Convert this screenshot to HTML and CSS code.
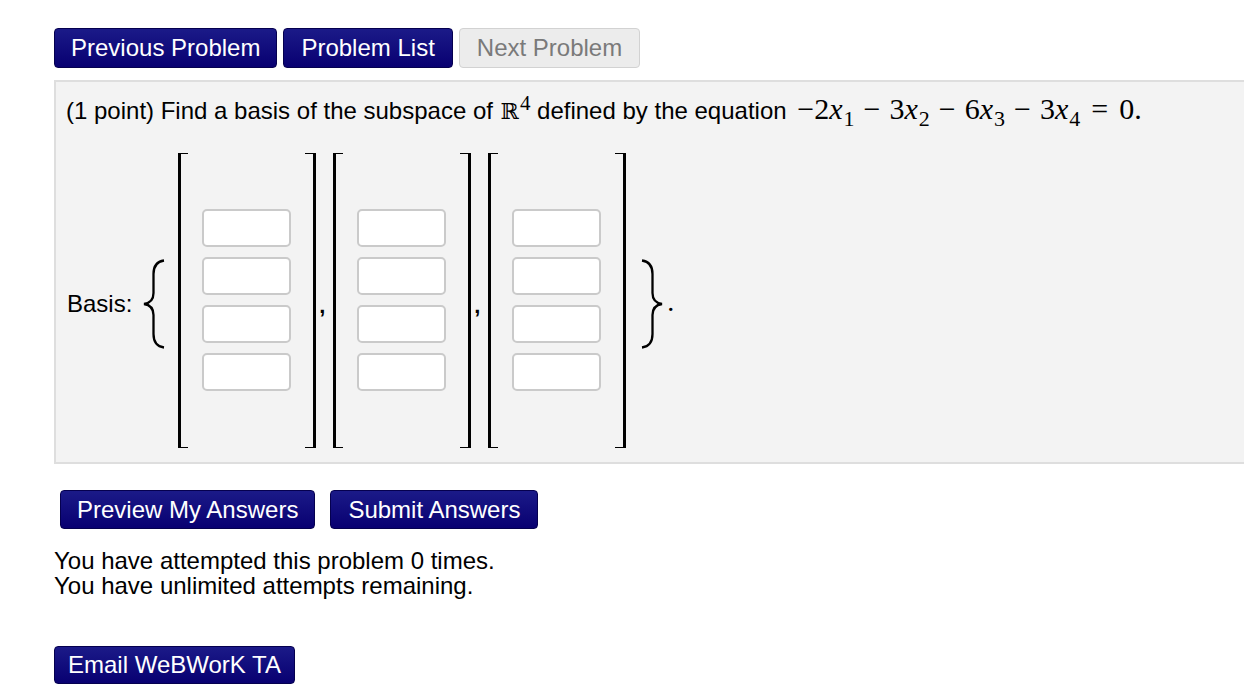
FILE: index.html
```html
<!DOCTYPE html>
<html>
<head>
<meta charset="utf-8">
<link rel="stylesheet" href="styles.css">
</head>
<body>
<div class="nav">
  <button class="btn">Previous Problem</button>
  <button class="btn btn-list">Problem List</button>
  <button class="btn disabled">Next Problem</button>
</div>
<div class="problem">
  <p class="statement">(1 point) Find a basis of the subspace of <span class="bb">ℝ<sup>4</sup></span> defined by the equation <span class="math"><span class="neg">−</span>2<i>x</i><sub>1</sub><span class="bin">−</span>3<i>x</i><sub>2</sub><span class="bin">−</span>6<i>x</i><sub>3</sub><span class="bin">−</span>3<i>x</i><sub>4</sub><span class="rel">=</span>0.</span></p>
  <div class="basis">
    <span class="label">Basis:</span>
    <svg class="brace brace-l" width="22" height="90" viewBox="0 0 22 90"><path d="M21,1.5 C13.5,2.5 10.5,7 10.5,15 L10.5,34 C10.5,40.5 7.5,44 1,45 C7.5,46 10.5,49.5 10.5,56 L10.5,75 C10.5,83 13.5,87.5 21,88.5" fill="none" stroke="#000" stroke-width="2.3"/></svg>
    <div class="matrix">
      <span class="bracket left"></span>
      <div class="col"><input><input><input><input></div>
      <span class="bracket right"></span>
    </div>
    <span class="sep">,</span>
    <div class="matrix">
      <span class="bracket left"></span>
      <div class="col"><input><input><input><input></div>
      <span class="bracket right"></span>
    </div>
    <span class="sep">,</span>
    <div class="matrix">
      <span class="bracket left"></span>
      <div class="col"><input><input><input><input></div>
      <span class="bracket right"></span>
    </div>
    <svg class="brace brace-r" width="22" height="90" viewBox="0 0 22 90"><path d="M1,1.5 C8.5,2.5 11.5,7 11.5,15 L11.5,34 C11.5,40.5 14.5,44 21,45 C14.5,46 11.5,49.5 11.5,56 L11.5,75 C11.5,83 8.5,87.5 1,88.5" fill="none" stroke="#000" stroke-width="2.3"/></svg>
    <span class="period">.</span>
  </div>
</div>
<div class="actions">
  <button class="btn btn-sm">Preview My Answers</button>
  <button class="btn btn-sm btn-submit">Submit Answers</button>
</div>
<p class="attempts">You have attempted this problem 0 times.<br>You have unlimited attempts remaining.</p>
<div class="email">
  <button class="btn btn-sm btn-email">Email WeBWorK TA</button>
</div>
</body>
</html>
```
FILE: styles.css
```css
html, body {
  margin: 0;
  padding: 0;
  background: #fff;
  overflow: hidden;
}
body {
  font-family: "Liberation Sans", Arial, sans-serif;
  font-size: 24px;
  color: #000;
}
.btn {
  font-family: "Liberation Sans", Arial, sans-serif;
  font-size: 24px;
  color: #fff;
  height: 40px;
  padding: 0 16px;
  border: 1px solid #05004f;
  border-radius: 4px;
  background: linear-gradient(#1b1a88, #080071);
  line-height: 38px;
  margin: 0;
}
.btn-list {
  padding: 0 17px;
}
.btn.disabled {
  color: #7a7a7a;
  background: #ececec;
  border-color: #d2d2d2;
  padding: 0 17px;
}
.btn-sm {
  height: 39px;
  line-height: 37px;
}
.btn-submit {
  padding: 0 17px;
}
.btn-email {
  padding: 0 13px;
  height: 38px;
  line-height: 36px;
}
.nav {
  display: flex;
  gap: 6px;
  padding: 28px 0 0 54px;
}
.problem {
  margin: 12px -30px 0 54px;
  background: #f3f3f3;
  border: 2px solid #dedede;
  padding: 15px 10px 14px 10px;
}
.statement {
  margin: 0;
  line-height: 28px;
  height: 28px;
  white-space: nowrap;
}
.bb {
  font-family: "DejaVu Serif", serif;
  font-size: 22px;
  line-height: 0;
  margin-left: 1px;
}
.bb sup {
  font-family: "Liberation Serif", serif;
  font-size: 21px;
  line-height: 0;
  vertical-align: 9px;
  margin-left: 1px;
}
.math {
  font-family: "Liberation Serif", "Times New Roman", serif;
  font-size: 30px;
  line-height: 0;
  margin-left: 4px;
}
.math i {
  font-style: italic;
}
.math sub {
  font-size: 22px;
  line-height: 0;
  vertical-align: -7px;
  margin-left: 1px;
}
.math .bin {
  margin: 0 9px;
}
.math .rel {
  margin: 0 11px;
}
.basis {
  display: flex;
  align-items: center;
  margin-top: 27px;
  height: 296px;
  padding-left: 1px;
}
.label {
  margin-top: 8px;
  margin-right: 11px;
}
.brace {
  display: block;
  margin-top: 8px;
}
.brace-l {
  margin-right: 13px;
}
.brace-r {
  margin-left: 15px;
}
.period {
  font-family: "Liberation Serif", serif;
  font-size: 28px;
  margin-left: 4px;
  margin-top: 4px;
}
.matrix {
  display: flex;
  align-items: center;
  height: 296px;
}
.bracket {
  display: block;
  height: 293px;
  border-top: 1.5px solid #000;
  border-bottom: 1.5px solid #000;
}
.bracket.left {
  width: 7px;
  border-left: 3px solid #000;
  margin-right: 14px;
}
.bracket.right {
  width: 8px;
  border-right: 3px solid #000;
  margin-left: 14px;
}
.col {
  display: flex;
  flex-direction: column;
  gap: 10px;
}
.col input {
  box-sizing: border-box;
  width: 89px;
  height: 38px;
  margin: 0;
  border: 2px solid #cacaca;
  border-radius: 5px;
  background: #fff;
  padding: 0;
  display: block;
}
.sep {
  font-family: "Liberation Sans", sans-serif;
  font-weight: bold;
  font-size: 22px;
  width: 17px;
  text-align: left;
  padding-left: 3px;
  box-sizing: border-box;
  margin-top: 12px;
}
.actions {
  display: flex;
  gap: 15px;
  padding: 26px 0 0 60px;
}
.attempts {
  margin: 19px 0 0 54px;
  line-height: 25px;
}
.email {
  padding: 48px 0 0 54px;
}
```
